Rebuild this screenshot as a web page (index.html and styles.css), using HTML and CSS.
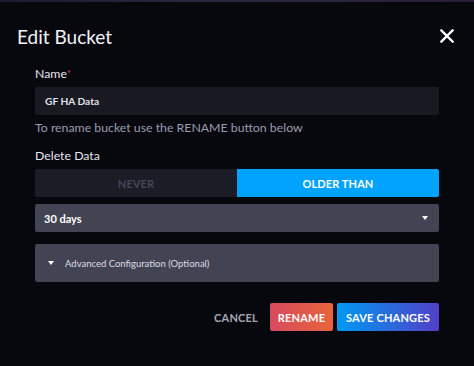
FILE: index.html
```html
<!DOCTYPE html>
<html lang="en">
<head>
    <meta charset="UTF-8">
    <meta name="viewport" content="width=device-width, initial-scale=1.0">
    <title>Edit Bucket</title>
    <link rel="stylesheet" href="styles.css">
</head>
<body>

    <div class="top-strip"></div>

    <div class="overlay-header">
        <h1 class="title">Edit Bucket</h1>
        <button class="close-btn" aria-label="Close">
            <svg width="14" height="14" viewBox="0 0 14 14">
                <path d="M1.5 1.5 L12.5 12.5 M12.5 1.5 L1.5 12.5" stroke="#ffffff" stroke-width="2.4" stroke-linecap="square"/>
            </svg>
        </button>
    </div>

    <div class="overlay-body">
        <label class="label">Name<span class="required">*</span></label>
        <div class="input">GF HA Data</div>
        <p class="helper">To rename bucket use the RENAME button below</p>

        <label class="label label-delete">Delete Data</label>
        <div class="toggle">
            <div class="toggle-item">NEVER</div>
            <div class="toggle-item active">OLDER THAN</div>
        </div>

        <div class="dropdown">
            <span>30 days</span>
            <span class="caret"></span>
        </div>

        <div class="advanced">
            <span class="caret"></span>
            <span class="advanced-text">Advanced Configuration (Optional)</span>
        </div>

        <div class="footer-buttons">
            <button class="btn btn-cancel">CANCEL</button>
            <button class="btn btn-rename">RENAME</button>
            <button class="btn btn-save">SAVE CHANGES</button>
        </div>
    </div>

</body>
</html>
```

FILE: styles.css
```css
body {
    margin: 0;
    font-family: Lato, "Open Sans", sans-serif;
    background-color: #07070e;
    color: #e6e6ee;
    width: 474px;
    height: 366px;
    overflow: hidden;
}
.top-strip {
    height: 2px;
    background: linear-gradient(90deg, #1e1c30 0%, #2a2840 50%, #2b1d3a 100%);
}
.overlay-header {
    display: flex;
    align-items: center;
    justify-content: space-between;
    padding: 20px 20px 0 17px;
    height: 28px;
}
.title {
    margin: 0;
    font-size: 19px;
    font-weight: 400;
    color: #f4f4f8;
}
.close-btn {
    background: none;
    border: none;
    padding: 0;
    width: 14px;
    height: 14px;
    display: flex;
    cursor: pointer;
}
.overlay-body {
    padding: 17px 35px 0 35px;
}
.label {
    display: block;
    font-size: 12.3px;
    color: #e6e6ee;
    line-height: 14px;
}
.required {
    color: #dc4e58;
    font-size: 9px;
    vertical-align: top;
}
.input {
    margin-top: 6px;
    height: 28px;
    line-height: 28px;
    background-color: #191922;
    border-radius: 2px;
    padding-left: 10px;
    font-size: 10.2px;
    font-weight: 700;
    color: #e0e0ea;
}
.helper {
    margin: 6px 0 0 0;
    font-size: 12.3px;
    line-height: 14px;
    color: #9a9db0;
}
.label-delete {
    margin-top: 14px;
}
.toggle {
    display: flex;
    margin-top: 6px;
    height: 28px;
}
.toggle-item {
    flex: 1;
    display: flex;
    align-items: center;
    justify-content: center;
    background-color: #1c1c26;
    color: #434757;
    font-size: 11px;
    font-weight: 700;
    letter-spacing: 0.1px;
    border-radius: 2px 0 0 2px;
}
.toggle-item.active {
    background-color: #00a3ff;
    color: #ffffff;
    border-radius: 0 2px 2px 0;
}
.dropdown {
    margin-top: 7px;
    height: 28px;
    display: flex;
    align-items: center;
    justify-content: space-between;
    padding: 0 11px 0 9px;
    background-color: #434453;
    border-radius: 2px;
    font-size: 11px;
    font-weight: 700;
    color: #ffffff;
}
.caret {
    width: 0;
    height: 0;
    border-left: 3.5px solid transparent;
    border-right: 3.5px solid transparent;
    border-top: 4px solid #ffffff;
}
.advanced {
    margin-top: 12px;
    height: 38px;
    display: flex;
    align-items: center;
    padding-left: 13px;
    background-color: #434453;
    border-radius: 2px;
}
.advanced-text {
    margin-left: 11px;
    font-size: 9.5px;
    color: #dcdce6;
}
.footer-buttons {
    display: flex;
    justify-content: flex-end;
    align-items: center;
    gap: 4px;
    margin-top: 21px;
}
.btn {
    height: 28px;
    border: none;
    border-radius: 2px;
    font-family: Lato, "Open Sans", sans-serif;
    font-size: 11px;
    font-weight: 700;
    letter-spacing: 0.2px;
    color: #ffffff;
    padding: 0;
    white-space: nowrap;
    cursor: pointer;
}
.btn-cancel {
    background: none;
    color: #a4a8b6;
    margin-right: 8px;
}
.btn-rename {
    width: 63px;
    background: linear-gradient(90deg, #d74a5e 0%, #e8643a 100%);
}
.btn-save {
    width: 102px;
    background: linear-gradient(90deg, #0099f2 0%, #5140c8 100%);
}
```
